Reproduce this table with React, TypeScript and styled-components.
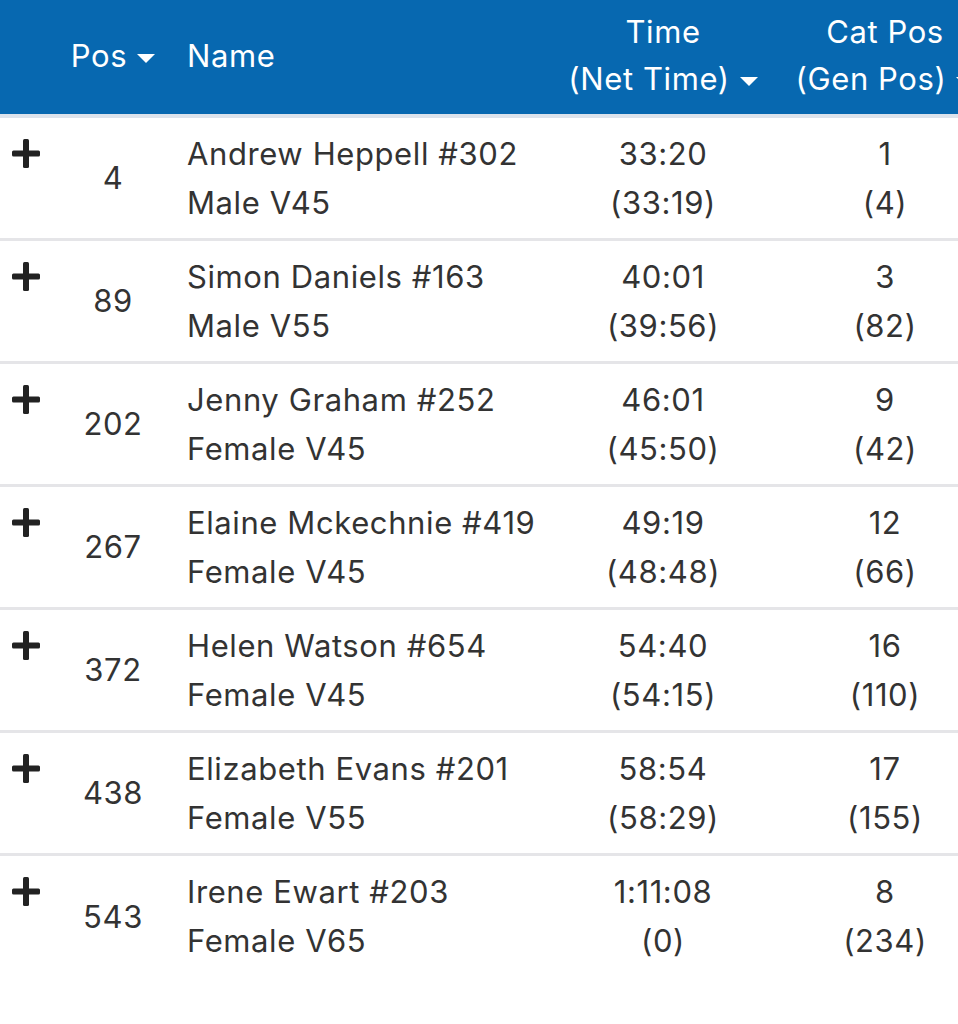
import React from 'react';
import styled, { createGlobalStyle } from 'styled-components';

const GlobalStyle = createGlobalStyle`
  html, body {
    margin: 0;
    padding: 0;
    background: #ffffff;
    overflow: hidden;
  }
  body {
    font-family: Inter, "Noto Sans", "Liberation Sans", sans-serif;
  }
`;

const Wrapper = styled.div`
  width: 958px;
  overflow: hidden;
`;

const Table = styled.table`
  width: 1012px;
  border-collapse: collapse;
  table-layout: fixed;
  font-size: 31px;
  letter-spacing: 0.6px;
  color: #333333;
`;

const HeadRow = styled.tr`
  background: #0768b0;
  color: #ffffff;
  height: 116px;
  border-bottom: 4px solid #dce3ec;
`;

const HeadCell = styled.th<{ $align?: string; $pad?: number }>`
  font-weight: 400;
  text-align: ${(p) => p.$align || 'center'};
  padding: 0 0 4px ${(p) => p.$pad || 0}px;
  line-height: 47px;
  white-space: nowrap;
`;

const Caret = styled.span`
  display: inline-block;
  width: 0;
  height: 0;
  margin-left: 10px;
  vertical-align: middle;
  border-left: 9px solid transparent;
  border-right: 9px solid transparent;
  border-top: 9px solid #ffffff;
`;

const Row = styled.tr`
  height: 123px;
  border-bottom: 3px solid #e5e5e8;
  &:last-child {
    border-bottom: none;
  }
`;

const IconCell = styled.td`
  vertical-align: top;
  padding: 20px 0 0 12px;
`;

const Cell = styled.td<{ $align?: string; $pad?: number }>`
  text-align: ${(p) => p.$align || 'center'};
  padding: 0 0 0 ${(p) => p.$pad || 0}px;
  line-height: 49px;
  white-space: nowrap;
`;

const Plus = () => (
  <svg width="28" height="29" viewBox="0 0 28 29">
    <rect x="11" y="0" width="6" height="29" rx="1.5" fill="#222222" />
    <rect x="0" y="11.5" width="28" height="6" rx="1.5" fill="#222222" />
  </svg>
);

type Result = {
  pos: number;
  name: string;
  cat: string;
  time: string;
  net: string;
  catPos: number;
  genPos: number;
};

const results: Result[] = [
  { pos: 4, name: 'Andrew Heppell #302', cat: 'Male V45', time: '33:20', net: '33:19', catPos: 1, genPos: 4 },
  { pos: 89, name: 'Simon Daniels #163', cat: 'Male V55', time: '40:01', net: '39:56', catPos: 3, genPos: 82 },
  { pos: 202, name: 'Jenny Graham #252', cat: 'Female V45', time: '46:01', net: '45:50', catPos: 9, genPos: 42 },
  { pos: 267, name: 'Elaine Mckechnie #419', cat: 'Female V45', time: '49:19', net: '48:48', catPos: 12, genPos: 66 },
  { pos: 372, name: 'Helen Watson #654', cat: 'Female V45', time: '54:40', net: '54:15', catPos: 16, genPos: 110 },
  { pos: 438, name: 'Elizabeth Evans #201', cat: 'Female V55', time: '58:54', net: '58:29', catPos: 17, genPos: 155 },
  { pos: 543, name: 'Irene Ewart #203', cat: 'Female V65', time: '1:11:08', net: '0', catPos: 8, genPos: 234 },
];

const App: React.FC = () => {
  return (
    <Wrapper>
      <GlobalStyle />
      <Table>
        <colgroup>
          <col style={{ width: 52 }} />
          <col style={{ width: 122 }} />
          <col style={{ width: 394 }} />
          <col style={{ width: 190 }} />
          <col style={{ width: 254 }} />
        </colgroup>
        <thead>
          <HeadRow>
            <HeadCell />
            <HeadCell>
              Pos<Caret />
            </HeadCell>
            <HeadCell $align="left" $pad={13}>
              Name
            </HeadCell>
            <HeadCell>
              Time
              <br />
              (Net Time)<Caret />
            </HeadCell>
            <HeadCell>
              Cat Pos
              <br />
              (Gen Pos)<Caret />
            </HeadCell>
          </HeadRow>
        </thead>
        <tbody>
          {results.map((r) => (
            <Row key={r.pos}>
              <IconCell>
                <Plus />
              </IconCell>
              <Cell>{r.pos}</Cell>
              <Cell $align="left" $pad={13}>
                {r.name}
                <br />
                {r.cat}
              </Cell>
              <Cell>
                {r.time}
                <br />({r.net})
              </Cell>
              <Cell>
                {r.catPos}
                <br />({r.genPos})
              </Cell>
            </Row>
          ))}
        </tbody>
      </Table>
    </Wrapper>
  );
};

export default App;
